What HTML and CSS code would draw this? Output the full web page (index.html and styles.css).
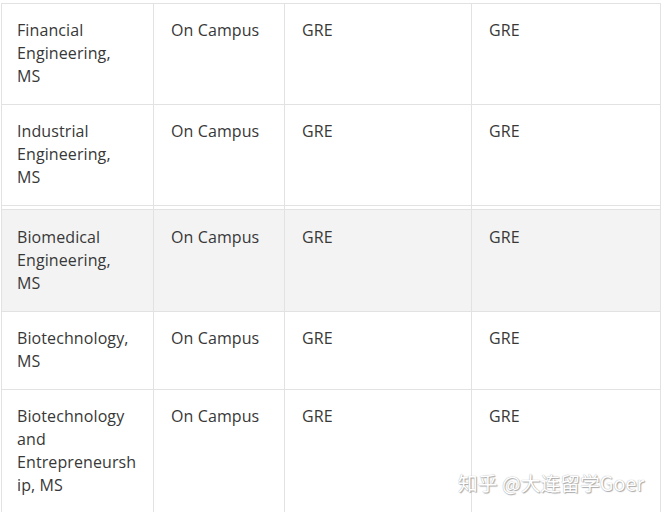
FILE: index.html
```html
<!DOCTYPE html>
<html lang="en">
<head>
<meta charset="utf-8">
<link rel="stylesheet" href="styles.css">
</head>
<body>
<div class="wrap">
<table class="programs">
  <colgroup>
    <col class="c1"><col class="c2"><col class="c3"><col class="c4">
  </colgroup>
  <tbody>
    <tr>
      <td>Financial<br>Engineering,<br>MS</td>
      <td>On Campus</td>
      <td>GRE</td>
      <td>GRE</td>
    </tr>
    <tr>
      <td>Industrial<br>Engineering,<br>MS</td>
      <td>On Campus</td>
      <td>GRE</td>
      <td>GRE</td>
    </tr>
    <tr class="alt">
      <td>Biomedical<br>Engineering,<br>MS</td>
      <td>On Campus</td>
      <td>GRE</td>
      <td>GRE</td>
    </tr>
    <tr>
      <td>Biotechnology,<br>MS</td>
      <td>On Campus</td>
      <td>GRE</td>
      <td>GRE</td>
    </tr>
    <tr class="last">
      <td>Biotechnology<br>and<br>Entrepreneursh<br>ip, MS</td>
      <td>On Campus</td>
      <td>GRE</td>
      <td>GRE</td>
    </tr>
  </tbody>
</table>
<div class="watermark">知乎 @大连留学Goer</div>
</div>
</body>
</html>
```

FILE: styles.css
```css
html, body {
  margin: 0;
  padding: 0;
  background: #fff;
}
.wrap {
  position: relative;
  width: 662px;
  height: 512px;
  overflow: hidden;
  padding-top: 3px;
  box-sizing: border-box;
}
.programs {
  border-collapse: collapse;
  table-layout: fixed;
  width: 659px;
  margin-left: 1px;
  font-family: "Open Sans", "Noto Sans", sans-serif;
  font-size: 16px;
  letter-spacing: 0.1px;
  line-height: 23px;
  color: #383838;
}
.c1 { width: 152px; }
.c2 { width: 131px; }
.c3 { width: 187px; }
.c4 { width: 189px; }
.programs td {
  border: 1px solid #e2e2e2;
  padding: 15px 12px 16px 17px;
  vertical-align: top;
  white-space: nowrap;
  text-align: left;
}
.programs td:first-child {
  padding-left: 15px;
}
.programs tr.alt td {
  background: #f3f3f3;
  padding-top: 20px;
  box-shadow: inset 0 3px 0 #fff, inset 0 4px 0 #e2e2e2;
}
.programs tr.last td {
  border-bottom: none;
}
.watermark {
  position: absolute;
  left: 458px;
  top: 470px;
  font-family: "Noto Sans CJK SC", "Noto Sans", sans-serif;
  font-size: 19.8px;
  line-height: 26px;
  color: #fff;
  text-shadow: 0 0 1px #999, 1px 1px 1px #aaa;
  white-space: nowrap;
}
```
